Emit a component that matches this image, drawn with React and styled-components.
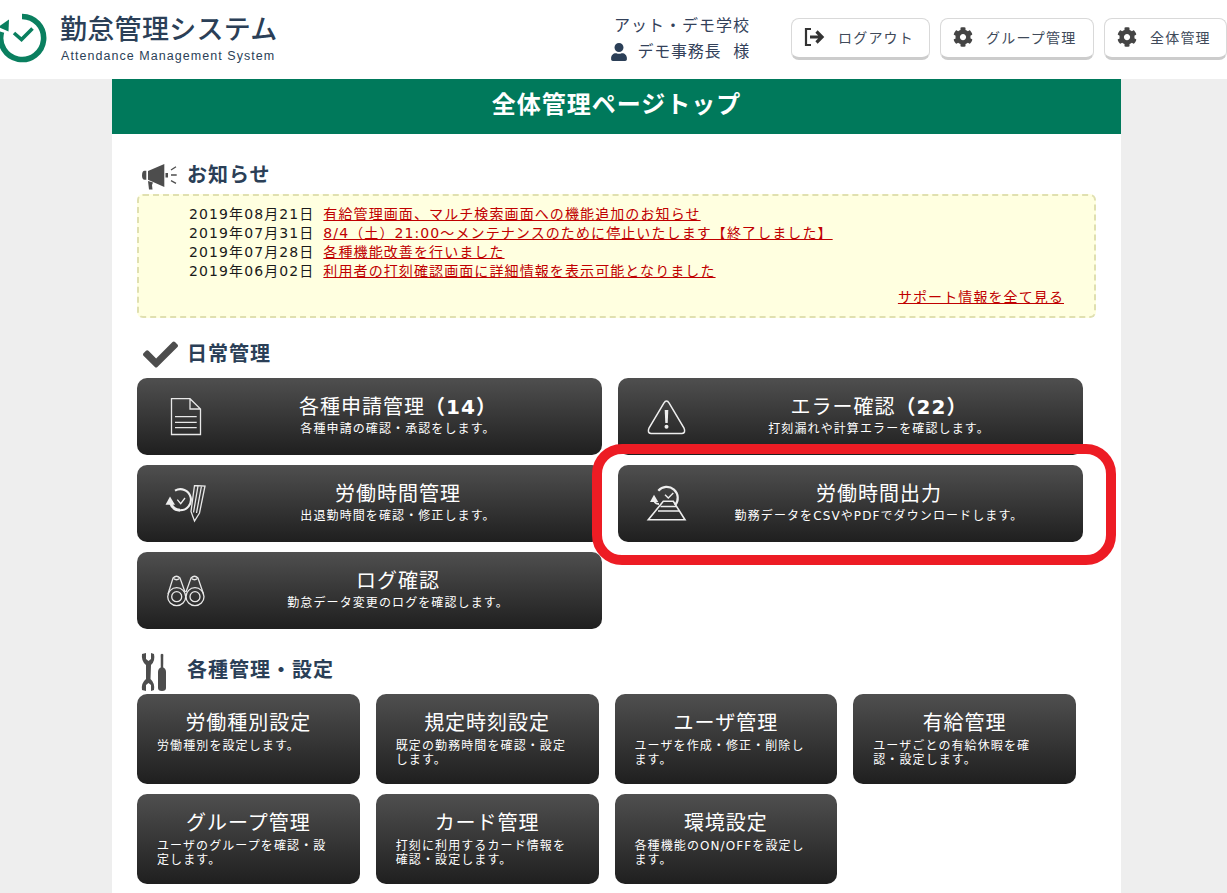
import React from "react";
import styled, { createGlobalStyle } from "styled-components";
import { FaCog, FaUser, FaCheck } from "react-icons/fa";

const Global = createGlobalStyle`
  html, body { margin: 0; padding: 0; background: #eeeeee; }
  body { font-family: "DejaVu Sans", "Noto Sans CJK JP", sans-serif; overflow: hidden; height: 893px; }
  * { box-sizing: border-box; }
`;

const Page = styled.div`
  position: relative;
  width: 1227px;
  height: 893px;
  overflow: hidden;
`;
const Header = styled.header`
  height: 79px;
  background: #fff;
  display: flex;
  align-items: flex-start;
`;
const Logo = styled.div`
  display: flex;
  margin-left: -2px;
  padding-top: 13px;
  gap: 12px;
  width: 604px;
`;
const LogoText = styled.div`
  display: flex;
  flex-direction: column;
  color: #2b3f57;
`;
const LogoMain = styled.div`
  font-size: 27px;
  line-height: 34px;
  font-weight: 500;
  letter-spacing: 0.3px;
  white-space: nowrap;
`;
const LogoSub = styled.div`
  font-family: "Liberation Sans", sans-serif;
  font-size: 12.5px;
  line-height: 14px;
  letter-spacing: 1.05px;
  white-space: nowrap;
  margin: 2px 0 0 1px;
`;
const School = styled.div`
  width: 150px;
  padding-top: 13px;
  color: #33415a;
  font-size: 16px;
  line-height: 26px;
  text-align: right;
  padding-right: 1px;
  letter-spacing: 1px;
`;
const PersonRow = styled.div`
  display: flex;
  align-items: center;
  justify-content: flex-end;
  gap: 9px;
  white-space: nowrap;
  letter-spacing: 0.8px;
`;
const HeadButtons = styled.div`
  display: flex;
  gap: 10px;
  padding-top: 18px;
  margin-left: 40px;
`;
const HeadButton = styled.div`
  height: 42px;
  width: ${(p) => p.$w}px;
  border: 1px solid #d9d9d9;
  border-bottom: 3px solid #cccccc;
  border-radius: 8px;
  background: #fff;
  display: flex;
  align-items: center;
  gap: ${(p) => p.$gap}px;
  padding: 0 0 2px 12px;
  font-size: 14px;
  color: #404a5a;
  white-space: nowrap;
  letter-spacing: 1.2px;
`;
const Main = styled.main`
  width: 1009px;
  margin-left: 112px;
  height: 814px;
  background: #fff;
`;
const TitleBar = styled.h1`
  margin: 0;
  height: 55px;
  background: #00795b;
  color: #fff;
  font-size: 24px;
  line-height: 53px;
  font-weight: 700;
  text-align: center;
  letter-spacing: 1px;
`;
const Content = styled.div`
  padding: 0 25px;
`;
const SectionHead = styled.h2`
  margin: 0;
  height: ${(p) => p.$h}px;
  padding-top: ${(p) => p.$top}px;
  display: flex;
  align-items: center;
  color: #2b3f57;
  font-size: 20px;
  font-weight: 700;
  letter-spacing: 1px;
`;
const HeadIcon = styled.span`
  width: 50px;
  display: flex;
  padding-left: ${(p) => p.$pad || 4}px;
  margin-top: ${(p) => p.$dy || 0}px;
  flex: none;
  color: #4d4d4d;
`;
const HeadLabel = styled.span`
  margin-top: -2px;
`;
const Notice = styled.div`
  position: relative;
  width: 959px;
  height: 124px;
  background: #ffffe0;
  border: 2px dashed #e0e0b0;
  border-radius: 6px;
  padding: 9px 0 0 50px;
  font-size: 14px;
  line-height: 19px;
  letter-spacing: 1.1px;
`;
const NoticeRow = styled.div`
  display: flex;
  gap: 9px;
  color: #1a1a1a;
  white-space: nowrap;
`;
const NoticeLink = styled.a`
  color: #c00000;
  text-decoration: underline;
`;
const MoreLink = styled(NoticeLink)`
  position: absolute;
  right: 30px;
  bottom: 9px;
`;
const WideGrid = styled.div`
  display: grid;
  grid-template-columns: 465px 465px;
  grid-auto-rows: 77px;
  gap: 10px 16px;
`;
const SmallGrid = styled.div`
  display: grid;
  grid-template-columns: repeat(4, 222.75px);
  grid-auto-rows: 90px;
  gap: 10px 16px;
`;
const Dark = styled.div`
  background: linear-gradient(#4f4f4f, #1f1f1f);
  border-radius: 10px;
  color: #fff;
`;
const WideCard = styled(Dark)`
  position: relative;
  text-align: center;
  padding: 15px 0 0 57px;
`;
const WideIcon = styled.span`
  position: absolute;
  left: 28px;
  top: 20px;
  display: block;
  width: 44px;
  height: 40px;
`;
const BigTitle = styled.div`
  font-size: 20px;
  line-height: 28px;
  letter-spacing: 1px;
  white-space: nowrap;
`;
const Count = styled.strong`
  font-weight: 700;
`;
const Desc = styled.div`
  font-size: 12px;
  line-height: 14px;
  letter-spacing: 1.1px;
  margin-top: 1px;
`;
const SmallCard = styled(Dark)`
  padding: 15px 20px 0;
  text-align: center;
`;
const SmallDesc = styled(Desc)`
  text-align: left;
  margin-top: 2px;
  padding-right: 7px;
`;
const Highlight = styled.div`
  position: absolute;
  left: 592px;
  top: 444px;
  width: 524px;
  height: 121px;
  border: 10px solid #ed1c24;
  border-radius: 30px;
  pointer-events: none;
`;

const LogoMark = () => (
  <svg width="50" height="50" viewBox="-2 13 50 50">
    <path d="M22 16.5 A21.5 21.5 0 1 1 1.5 32" fill="none" stroke="#0a7f5f" strokeWidth="5.6" />
    <path d="M9 19.5 L-2 27 L8.5 31.5 Z" fill="#0a7f5f" />
    <path d="M14 33 L21.5 39.5 L32.5 28.5" fill="none" stroke="#0a7f5f" strokeWidth="3.6" />
  </svg>
);
const LogoutIcon = () => (
  <svg width="22" height="20" viewBox="0 0 22 20">
    <path d="M7 2 H2 V18 H7" fill="none" stroke="#333" strokeWidth="2.2" />
    <path d="M6 10 H18 M12.5 4.5 L18 10 L12.5 15.5" fill="none" stroke="#333" strokeWidth="3.2" />
  </svg>
);
const Bullhorn = () => (
  <svg width="36" height="30" viewBox="0 0 36 30">
    <path d="M23.3 3 V26 L7 18.8 V10 Z" fill="#4d4d4d" />
    <path d="M5.3 9.8 V18.8 H3.5 Q1 18.5 1 14.5 Q1 10 3.5 9.8 Z" fill="#4d4d4d" />
    <path d="M7 20 L12 21.5 L11 24 L11.5 28.5 H8 Z" fill="#4d4d4d" />
    <rect x="24.5" y="12" width="2.5" height="4.5" fill="#4d4d4d" />
    <path d="M30 9 L35 5.7 M30 14 H35.7 M30 19.7 L35 22.3" stroke="#4d4d4d" strokeWidth="1.3" fill="none" />
  </svg>
);
const Tools = () => (
  <svg width="26" height="38" viewBox="0 0 26 38">
    <path d="M1 1 L5 0 V6 L7.5 8 L10 6 V0 L13 1 Q14.5 8 10 12 L9.5 26 Q14 30 13 37 L10 38 V32 L7.5 30 L5 32 V38 L1 37 Q0 30 5 26 L5 12 Q0 8 1 1 Z" fill="#4d4d4d" />
    <path d="M19.7 1.5 Q21 0 22.3 1.5 L22.2 15 H19.8 Z" fill="#4d4d4d" />
    <path d="M17 19 Q17 15 21 14 Q25 15 25 19 V35 Q25 38 21 38 Q17 38 17 35 Z" fill="#4d4d4d" />
  </svg>
);
const s = { fill: "none", stroke: "#e8e8e8", strokeWidth: 1.3 };
const DocIcon = () => (
  <svg width="44" height="40" viewBox="0 0 44 40">
    <path d="M6.5 .7 H25 L35.5 11 V36.5 H6.5 Z M25 .7 V11 H35.5" {...s} />
    <path d="M10 18.7 H31.7 M10 24.3 H31.7 M10 29.7 H31.7" {...s} />
  </svg>
);
const ClockPen = () => (
  <svg width="44" height="40" viewBox="0 0 44 40">
    <path d="M10 5.7 A10.5 10.5 0 1 1 15 25.2" fill="none" stroke="#eee" strokeWidth="2.1" />
    <path d="M15 25.2 A10.5 10.5 0 0 1 5.5 18" fill="none" stroke="#eee" strokeWidth="3" />
    <path d="M5 11.5 L0.5 19.7 L10 19.7 Z" fill="#eee" />
    <path d="M12.3 14.7 L15.7 18.7 L20 13" fill="none" stroke="#eee" strokeWidth="1.3" />
    <path d="M29.5 .5 L40 1 L34.5 28 L29.5 36 L26 26.5 Z M33 1 L28.5 27.5 M36.5 1 L31.5 28" {...s} />
  </svg>
);
const Binoculars = () => (
  <svg width="44" height="40" viewBox="0 0 44 40">
    <g {...s}>
      <path d="M3 22 L8 6 Q11.5 2.5 15 6 L20 20 M21 20 L26 6 Q29.5 2.5 33 6 L38.5 22" />
      <circle cx="11.7" cy="24.7" r="9" /><circle cx="11.7" cy="24.7" r="5" />
      <circle cx="30" cy="24.7" r="9" /><circle cx="30" cy="24.7" r="5" />
      <path d="M8.5 6.5 Q11.5 9 14.5 6.5 M26.5 6.5 Q29.5 9 32.5 6.5" />
    </g>
  </svg>
);
const Warn = () => (
  <svg width="44" height="40" viewBox="0 0 44 40">
    <path d="M20.5 3 Q19 3 18 5 L3 30 Q1 35 5 35.5 H36 Q40 35 38 30 L23 5 Q22 3 20.5 3 Z" fill="none" stroke="#eee" strokeWidth="1.5" />
    <path d="M18.7 12 H22.3 L21.7 25 H19.3 Z" fill="#eee" />
    <circle cx="20.5" cy="28.7" r="2" fill="#eee" />
  </svg>
);
const Output = () => (
  <svg width="44" height="40" viewBox="0 0 44 40">
    <path d="M12.3 5.7 A11 11 0 1 1 29 20.3" fill="none" stroke="#eee" strokeWidth="2.2" />
    <path d="M8 9.7 L4 17 L12.3 17 Z" fill="#eee" />
    <path d="M8.5 17 Q10 19 13 19" fill="none" stroke="#eee" strokeWidth="2" />
    <path d="M19 9.7 L22.3 13 L27.3 8" fill="none" stroke="#eee" strokeWidth="1.4" />
    <path d="M17.3 16.3 H27.3 L39 34.7 H2.3 Z" fill="none" stroke="#eee" strokeWidth="1.6" />
    <path d="M14.5 21.5 H30.5 M12 26 H33" stroke="#eee" strokeWidth="1.3" />
  </svg>
);

const notices = [
  ["2019年08月21日", "有給管理画面、マルチ検索画面への機能追加のお知らせ"],
  ["2019年07月31日", "8/4（土）21:00～メンテナンスのために停止いたします【終了しました】"],
  ["2019年07月28日", "各種機能改善を行いました"],
  ["2019年06月02日", "利用者の打刻確認画面に詳細情報を表示可能となりました"],
];
const wide = [
  [DocIcon, "各種申請管理", "各種申請の確認・承認をします。", "（14）"],
  [Warn, "エラー確認", "打刻漏れや計算エラーを確認します。", "（22）"],
  [ClockPen, "労働時間管理", "出退勤時間を確認・修正します。"],
  [Output, "労働時間出力", "勤務データをCSVやPDFでダウンロードします。"],
  [Binoculars, "ログ確認", "勤怠データ変更のログを確認します。"],
];
const small = [
  ["労働種別設定", "労働種別を設定します。"],
  ["規定時刻設定", "既定の勤務時間を確認・設定します。"],
  ["ユーザ管理", "ユーザを作成・修正・削除します。"],
  ["有給管理", "ユーザごとの有給休暇を確認・設定します。"],
  ["グループ管理", "ユーザのグループを確認・設定します。"],
  ["カード管理", "打刻に利用するカード情報を確認・設定します。"],
  ["環境設定", "各種機能のON/OFFを設定します。"],
];

export default function App() {
  return (
    <Page>
      <Global />
      <Header>
        <Logo>
          <LogoMark />
          <LogoText>
            <LogoMain>勤怠管理システム</LogoMain>
            <LogoSub>Attendance Management System</LogoSub>
          </LogoText>
        </Logo>
        <School>
          <div>アット・デモ学校</div>
          <PersonRow><FaUser size={18} color="#2b3f57" />デモ事務長&nbsp;&nbsp;様</PersonRow>
        </School>
        <HeadButtons>
          <HeadButton $w={139} $gap={12}><LogoutIcon />ログアウト</HeadButton>
          <HeadButton $w={154} $gap={13}><FaCog size={20} color="#444" />グループ管理</HeadButton>
          <HeadButton $w={123} $gap={13}><FaCog size={20} color="#444" />全体管理</HeadButton>
        </HeadButtons>
      </Header>
      <Main>
        <TitleBar>全体管理ページトップ</TitleBar>
        <Content>
          <SectionHead $h={60} $top={20}><HeadIcon $dy={4}><Bullhorn /></HeadIcon><HeadLabel>お知らせ</HeadLabel></SectionHead>
          <Notice>
            {notices.map(([d, t]) => (
              <NoticeRow key={d}>{d}<NoticeLink>{t}</NoticeLink></NoticeRow>
            ))}
            <MoreLink>サポート情報を全て見る</MoreLink>
          </Notice>
          <SectionHead $h={60} $top={10}><HeadIcon $pad={6} $dy={2}><FaCheck size={35} /></HeadIcon><HeadLabel>日常管理</HeadLabel></SectionHead>
          <WideGrid>
            {wide.map(([Icon, t, d, c]) => (
              <WideCard key={t}>
                <WideIcon><Icon /></WideIcon>
                <BigTitle>{t}{c && <Count>{c}</Count>}</BigTitle>
                <Desc>{d}</Desc>
              </WideCard>
            ))}
          </WideGrid>
          <SectionHead $h={65} $top={16}><HeadIcon $dy={4}><Tools /></HeadIcon><HeadLabel>各種管理・設定</HeadLabel></SectionHead>
          <SmallGrid>
            {small.map(([t, d]) => (
              <SmallCard key={t}>
                <BigTitle>{t}</BigTitle>
                <SmallDesc>{d}</SmallDesc>
              </SmallCard>
            ))}
          </SmallGrid>
        </Content>
      </Main>
      <Highlight />
    </Page>
  );
}
